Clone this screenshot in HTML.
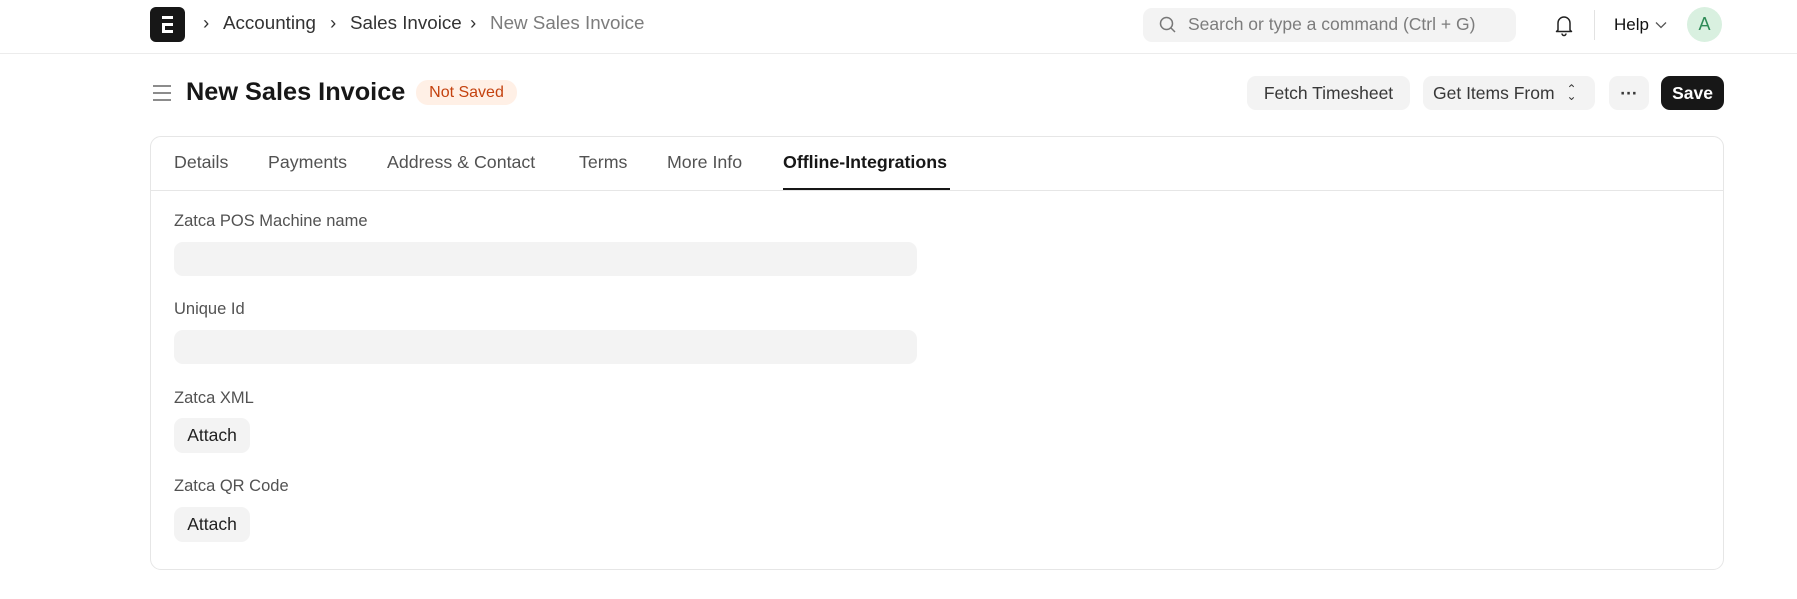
<!DOCTYPE html>
<html><head><meta charset="utf-8"><style>
*{box-sizing:border-box;margin:0;padding:0}
body{width:1797px;height:599px;background:#fff;font-family:"Liberation Sans",sans-serif;color:#1f1f1f;position:relative;overflow:hidden}
.a{position:absolute;white-space:nowrap}
.hdr{position:absolute;left:0;top:0;width:1797px;height:54px;border-bottom:1px solid #ececec}
.btn{position:absolute;background:#f3f3f3;border-radius:9px;font-size:17.5px;color:#383838;display:flex;align-items:center;justify-content:center}
.lbl{position:absolute;left:174px;font-size:16.5px;color:#525252}
.inp{position:absolute;left:174px;width:743px;height:34px;background:#f3f3f3;border-radius:9px}
.tab{position:absolute;top:152px;font-size:17.8px;color:#525252}
.bc{position:absolute;top:12px;font-size:18.8px;color:#333;white-space:nowrap}
</style></head><body>
<div class="hdr"></div>
<div class="a" style="left:150px;top:7px;width:35px;height:35px;background:#171717;border-radius:6px">
 <div class="a" style="left:12px;top:9px;width:11px;height:3px;background:#fff"></div>
 <div class="a" style="left:12px;top:16px;width:11px;height:3px;background:#fff"></div>
 <div class="a" style="left:12px;top:16px;width:3px;height:10px;background:#fff"></div>
 <div class="a" style="left:12px;top:23px;width:11px;height:3px;background:#fff"></div>
</div>
<div class="bc" style="left:203px">›</div>
<div class="bc" style="left:223px">Accounting</div>
<div class="bc" style="left:330px">›</div>
<div class="bc" style="left:350px">Sales Invoice</div>
<div class="bc" style="left:470px">›</div>
<div class="bc" style="left:490px;color:#7c7c7c">New Sales Invoice</div>
<div class="a" style="left:1143px;top:8px;width:373px;height:34px;background:#f3f3f3;border-radius:9px"></div>
<svg class="a" style="left:1158px;top:15px" width="20" height="20" viewBox="0 0 20 20"><circle cx="8.5" cy="8.5" r="6" fill="none" stroke="#777" stroke-width="1.5"/><line x1="13" y1="13" x2="17" y2="17" stroke="#777" stroke-width="1.5"/></svg>
<div class="a" style="left:1188px;top:14px;font-size:17.5px;color:#7c7c7c">Search or type a command (Ctrl + G)</div>
<svg class="a" style="left:1554px;top:13px" width="20" height="24" viewBox="0 0 20 24"><path d="M4 17V10a6 6 0 0 1 12 0v7l1.5 1.5h-15z" fill="none" stroke="#222" stroke-width="1.5" stroke-linejoin="round"/><path d="M8 20.5a2 2 0 0 0 4 0" fill="none" stroke="#222" stroke-width="1.5"/></svg>
<div class="a" style="left:1594px;top:10px;width:1px;height:30px;background:#e2e2e2"></div>
<div class="a" style="left:1614px;top:15px;font-size:17px;color:#111">Help</div>
<svg class="a" style="left:1655px;top:21px" width="12" height="8" viewBox="0 0 12 8"><path d="M1 1.5l5 5 5-5" fill="none" stroke="#555" stroke-width="1.3"/></svg>
<div class="a" style="left:1687px;top:7px;width:35px;height:35px;border-radius:50%;background:#d9f0e0;color:#2e8b57;font-size:18px;text-align:center;line-height:35px">A</div>

<svg class="a" style="left:152px;top:83px" width="20" height="20" viewBox="0 0 20 20"><path d="M1 3h18M1 10h18M1 17h18" stroke="#666" stroke-width="1.6"/></svg>
<div class="a" style="left:186px;top:78px;font-size:25.3px;font-weight:bold;color:#171717">New Sales Invoice</div>
<div class="a" style="left:416px;top:80px;width:101px;height:25px;background:#fff0e6;border-radius:12px;color:#c4420f;font-size:16px;text-align:center;line-height:25px">Not Saved</div>

<div class="btn" style="left:1247px;top:76px;width:163px;height:34px">Fetch Timesheet</div>
<div class="btn" style="left:1423px;top:76px;width:172px;height:34px;justify-content:flex-start;padding-left:10px">Get Items From<span style="font-size:12px;margin-left:12px;line-height:7px;text-align:center">⌃<br>⌄</span></div>
<div class="btn" style="left:1609px;top:76px;width:40px;height:34px;font-weight:bold">···</div>
<div class="btn" style="left:1661px;top:76px;width:63px;height:34px;background:#171717;color:#fff;font-weight:bold">Save</div>

<div class="a" style="left:150px;top:136px;width:1574px;height:434px;border:1px solid #e6e6e6;border-radius:11px"></div>
<div class="a" style="left:151px;top:190px;width:1572px;height:1px;background:#e6e6e6"></div>
<div class="tab" style="left:174px">Details</div>
<div class="tab" style="left:268px">Payments</div>
<div class="tab" style="left:387px">Address &amp; Contact</div>
<div class="tab" style="left:579px">Terms</div>
<div class="tab" style="left:667px">More Info</div>
<div class="tab" style="left:783px;color:#171717;font-weight:bold">Offline-Integrations</div>
<div class="a" style="left:783px;top:188px;width:167px;height:2px;background:#171717"></div>

<div class="lbl" style="top:212px">Zatca POS Machine name</div>
<div class="inp" style="top:242px"></div>
<div class="lbl" style="top:300px">Unique Id</div>
<div class="inp" style="top:330px"></div>
<div class="lbl" style="top:389px">Zatca XML</div>
<div class="btn" style="left:174px;top:418px;width:76px;height:35px;color:#222">Attach</div>
<div class="lbl" style="top:477px">Zatca QR Code</div>
<div class="btn" style="left:174px;top:507px;width:76px;height:35px;color:#222">Attach</div>
</body></html>
